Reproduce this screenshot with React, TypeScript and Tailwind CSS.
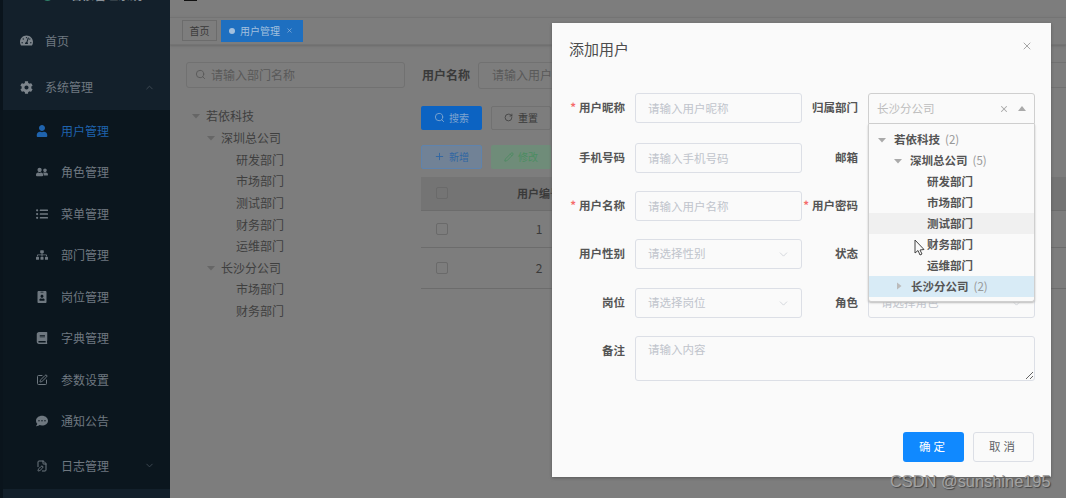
import React from "react";
import { ChevronDown, ChevronUp, Plus, RotateCw, Search, SquarePen, FilePen, Pencil, X } from "lucide-react";
import { FaCog, FaCommentDots, FaSitemap, FaTachometerAlt, FaUser, FaUserFriends, FaIdBadge, FaBook, FaListUl } from "react-icons/fa";

const subMenu = [
  { label: "用户管理", icon: <FaUser size={12} />, active: true },
  { label: "角色管理", icon: <FaUserFriends size={12} /> },
  { label: "菜单管理", icon: <FaListUl size={12} /> },
  { label: "部门管理", icon: <FaSitemap size={12} /> },
  { label: "岗位管理", icon: <FaIdBadge size={12} /> },
  { label: "字典管理", icon: <FaBook size={12} /> },
  { label: "参数设置", icon: <SquarePen size={12} /> },
  { label: "通知公告", icon: <FaCommentDots size={12} /> },
];

const Caret = ({ right, color }: { right?: boolean; color: string }) => (
  <svg width="8" height="8" viewBox="0 0 8 8" className="shrink-0">
    <path d={right ? "M2 0.5 L6.5 4 L2 7.5 Z" : "M0 2 L8 2 L4 6.5 Z"} fill={color} />
  </svg>
);

const Sidebar = () => (
  <aside className="w-[170px] h-full shrink-0 flex flex-col bg-[#13202b] border-l-[3px] border-[#0a141c] text-[#6f7880] text-xs overflow-hidden">
    <div className="h-[17px] overflow-hidden relative">
      <div className="flex items-center gap-[17px] pl-[39px] -mt-[13px] text-[#8a9299] font-bold">
        <span className="w-[11px] h-[11px] rounded-full bg-[#2f7f68]" />
        <span>若依管理系统</span>
      </div>
    </div>
    <div className="h-[47px] flex items-center pl-[17px] gap-[12px]">
      <FaTachometerAlt size={13} className="text-[#7d858c]" />
      <span>首页</span>
    </div>
    <div className="h-[46px] flex items-center pl-[17px] gap-[12px]">
      <FaCog size={13} className="text-[#7d858c]" />
      <span>系统管理</span>
      <ChevronUp size={11} className="ml-auto mr-[15px] text-[#3f4a54]" />
    </div>
    <div className="bg-[#0b161e]">
      {subMenu.map((m) => (
        <div
          key={m.label}
          className={
            "h-[41.5px] flex items-center pl-[33px] gap-[13px] " +
            (m.active ? "text-[#1f63ad]" : "")
          }
        >
          {m.icon}
          <span>{m.label}</span>
        </div>
      ))}
      <div className="h-[47px] flex items-center pl-[33px] gap-[13px]">
        <FilePen size={12} />
        <span>日志管理</span>
        <ChevronDown size={11} className="ml-auto mr-[15px] text-[#3f4a54]" />
      </div>
    </div>
    <div className="flex-1 bg-[#13202b]" />
  </aside>
);

const DeptTree = () => {
  const rows: [string, number, boolean][] = [
    ["若依科技", 0, true],
    ["深圳总公司", 1, true],
    ["研发部门", 2, false],
    ["市场部门", 2, false],
    ["测试部门", 2, false],
    ["财务部门", 2, false],
    ["运维部门", 2, false],
    ["长沙分公司", 1, true],
    ["市场部门", 2, false],
    ["财务部门", 2, false],
  ];
  return (
    <div className="mt-[18px] text-xs text-[#3f3f3f]">
      {rows.map(([name, level, open], i) => (
        <div key={i} className="h-[21.65px] flex items-center">
          <span className={level === 0 ? "w-[6px]" : level === 1 ? "w-[21px]" : "w-[50px]"} />
          {open && <Caret color="#666666" />}
          {open && <span className="w-[6px]" />}
          <span>{name}</span>
        </div>
      ))}
    </div>
  );
};

const Main = () => (
  <main className="flex-1 min-w-0 h-full bg-[#7d7d7d] flex flex-col overflow-hidden text-xs text-[#3a3a3a]">
    <div className="h-[17px] shrink-0 overflow-hidden">
      <div className="flex items-center -mt-[14px] pl-[14px] text-[#2f2f2f]">
        <span className="w-[13px] h-[13px] bg-[#111111]" />
        <span className="ml-[21px]">首页</span>
        <span className="ml-[28px]">系统管理</span>
        <span className="ml-[18px]">用户</span>
        <span className="ml-[15px]">管理</span>
      </div>
    </div>
    <div className="h-[27.5px] shrink-0 flex items-center gap-[4px] pl-[12px] border-y border-[#747474] shadow-[0_1px_2px_#6a6a6a] text-[10px]">
      <span className="h-[21px] w-[35px] flex items-center justify-center border border-[#6c6c6c] text-[#3a3a3a]">首页</span>
      <span className="h-[22px] w-[82px] flex items-center pl-[8px] bg-[#1e6fc0] text-[#a3c0de]">
        <span className="w-[6px] h-[6px] rounded-full bg-[#a3c0de] mr-[5px]" />
        用户管理
        <X size={7} className="ml-[6px]" />
      </span>
    </div>
    <div className="flex flex-1 min-h-0 pl-[16px] pt-[17px] gap-[16px]">
      <div className="w-[219px] shrink-0">
        <div className="h-[26px] border border-[#717171] rounded-[3px] flex items-center pl-[8px] gap-[5px] text-[#595959]">
          <Search size={11} />
          <span>请输入部门名称</span>
        </div>
        <DeptTree />
      </div>
      <div className="flex-1 min-w-0">
        <div className="flex items-center h-[27px] w-[700px]">
          <span className="font-bold w-[57px] shrink-0 pl-px">用户名称</span>
          <div className="h-[27px] w-[180px] pl-[13px] flex items-center border border-[#717171] rounded-[3px] text-[#595959]">请输入用户名称</div>
          <div className="ml-auto h-[26px] w-[100px] flex items-center pl-[50px] border-y border-[#717171] text-[#595959]">用户状态</div>
        </div>
        <div className="flex gap-[9px] mt-[17px] text-[10px]">
          <span className="w-[61px] h-[24px] flex items-center justify-center gap-[4px] rounded-[2px] bg-[#0c63c2] text-[#7fa5cf]">
            <Search size={11} />
            搜索
          </span>
          <span className="w-[60px] h-[24px] flex items-center justify-center gap-[5px] rounded-[2px] border border-[#717171]">
            <RotateCw size={9} />
            重置
          </span>
        </div>
        <div className="flex gap-[9px] mt-[15px] text-[10px]">
          <span className="w-[61px] h-[24px] flex items-center justify-center gap-[4px] rounded-[2px] border border-[#5f83ad] bg-[#718296] text-[#2f66a3]">
            <Plus size={11} />
            新增
          </span>
          <span className="w-[60px] h-[24px] flex items-center justify-center gap-[4px] rounded-[2px] bg-[#6f8c79] text-[#4c8c62]">
            <Pencil size={10} />
            修改
          </span>
        </div>
        <div className="mt-[8px] w-[700px]">
          <div className="h-[34px] flex items-center bg-[#747474] border-b border-[#6c6c6c] font-bold text-[11px]">
            <span className="w-[42px] flex justify-center">
              <span className="w-[12px] h-[12px] border border-[#6a6a6a] rounded-[2px]" />
            </span>
            <span className="w-[152px] text-center">用户编号</span>
          </div>
          {[
            { n: "1", h: "h-[37px]" },
            { n: "2", h: "h-[41px]" },
          ].map((r) => (
            <div key={r.n} className={"flex items-center border-b border-[#6c6c6c] " + r.h}>
              <span className="w-[42px] flex justify-center">
                <span className="w-[12px] h-[12px] border border-[#6a6a6a] rounded-[2px]" />
              </span>
              <span className="w-[152px] text-center">{r.n}</span>
            </div>
          ))}
        </div>
      </div>
    </div>
  </main>
);

const Field = ({ label, required, children }: { label: string; required?: boolean; children: React.ReactNode }) => (
  <>
    <label className="h-[30px] flex items-center justify-end pr-[10px] font-bold text-[#555555] text-[11.5px] whitespace-nowrap">
      {required && <span className="text-[#f56c6c] mr-[3px]">*</span>}
      {label}
    </label>
    {children}
  </>
);

const inputClass =
  "h-[30px] w-full px-[12px] bg-transparent border border-[#dcdfe6] rounded-[3px] text-[11.5px] outline-none placeholder:text-[#c0c4cc]";

const SelectBox = ({ text }: { text: string }) => (
  <div className="h-[30px] w-full pl-[12px] pr-[11px] flex items-center justify-between border border-[#dcdfe6] rounded-[3px] text-[11.5px] text-[#c0c4cc]">
    <span>{text}</span>
    <ChevronDown size={13} strokeWidth={1.2} />
  </div>
);

const treeRows = [
  { name: "若依科技", count: "(2)", pl: "pl-[9px]", caret: true },
  { name: "深圳总公司", count: "(5)", pl: "pl-[25px]", caret: true },
  { name: "研发部门", pl: "pl-[58px]" },
  { name: "市场部门", pl: "pl-[58px]" },
  { name: "测试部门", pl: "pl-[58px]", bg: "bg-[#f0f0f0]" },
  { name: "财务部门", pl: "pl-[58px]" },
  { name: "运维部门", pl: "pl-[58px]" },
  { name: "长沙分公司", count: "(2)", pl: "pl-[26px]", caret: true, closed: true, bg: "bg-[#d8ebf6]" },
];

const DeptSelect = () => (
  <div className="relative">
    <div className="h-[31px] pl-[8px] pr-[8px] flex items-center border border-[#cfcfcf] rounded-t-[3px] text-[11.5px] text-[#bdbdbd]">
      <span>长沙分公司</span>
      <X size={10} className="ml-auto mr-[9px] text-[#a8a8a8]" strokeWidth={2.5} />
      <svg width="8" height="5" viewBox="0 0 8 5"><path d="M0 5 L4 0 L8 5 Z" fill="#aaaaaa" /></svg>
    </div>
    <div className="absolute z-10 left-0 right-0 top-[31px] pt-[5.5px] pb-[4px] bg-[#fafafa] border border-t-0 border-[#cfcfcf] rounded-b-[3px] shadow-[0_1px_2px_#bbbbbb] text-[11.5px] font-bold text-[#555555]">
      {treeRows.map((r, i) => (
        <div key={i} className={"h-[20.9px] flex items-center " + r.pl + " " + (r.bg ?? "")}>
          {r.caret && <Caret right={r.closed} color={r.closed ? "#bbbbbb" : "#aaaaaa"} />}
          {r.caret && <span className="w-[8px]" />}
          <span>{r.name}</span>
          {r.count && <span className="ml-[5px] font-normal text-[#999999]">{r.count}</span>}
        </div>
      ))}
    </div>
  </div>
);

const Modal = () => (
  <div className="absolute z-20 left-[552px] top-[23px] w-[499px] h-[454px] bg-[#fafafa] shadow-[0_1px_3px_#5a5a5a] flex flex-col">
    <div className="h-[70px] shrink-0 flex items-start justify-between pl-[17px] pr-[18px] pt-[14px]">
      <span className="text-[15px] leading-[24px] text-[#4d4d4d]">添加用户</span>
      <X size={12} strokeWidth={1.5} className="mt-[3px] text-[#8a8a8a]" />
    </div>
    <div className="grid grid-cols-[83px_167px_66px_167px] grid-rows-[50px_48px_48px_49px_48px] items-start">
      <Field label="用户昵称" required><input className={inputClass} placeholder="请输入用户昵称" /></Field>
      <Field label="归属部门"><DeptSelect /></Field>
      <Field label="手机号码"><input className={inputClass} placeholder="请输入手机号码" /></Field>
      <Field label="邮箱"><input className={inputClass} placeholder="请输入邮箱" /></Field>
      <Field label="用户名称" required><input className={inputClass} placeholder="请输入用户名称" /></Field>
      <Field label="用户密码" required><input className={inputClass} placeholder="请输入用户密码" /></Field>
      <Field label="用户性别"><SelectBox text="请选择性别" /></Field>
      <Field label="状态"><SelectBox text="" /></Field>
      <Field label="岗位"><SelectBox text="请选择岗位" /></Field>
      <Field label="角色"><SelectBox text="请选择角色" /></Field>
    </div>
    <div className="flex">
      <label className="w-[83px] h-[30px] flex items-center justify-end pr-[10px] font-bold text-[#555555] text-[11.5px]">备注</label>
      <textarea
        className="w-[400px] h-[45px] px-[12px] py-[4px] bg-transparent border border-[#dcdfe6] rounded-[3px] text-[11.5px] outline-none placeholder:text-[#c0c4cc]"
        placeholder="请输入内容"
      />
    </div>
    <div className="mt-auto mb-[15px] pr-[17px] flex justify-end gap-[9px] text-[11.5px]">
      <span className="w-[61px] h-[30px] flex items-center justify-center tracking-[3px] rounded-[3px] bg-[#1089ff] text-white">确定</span>
      <span className="w-[61px] h-[30px] flex items-center justify-center tracking-[3px] rounded-[3px] border border-[#dcdfe6] text-[#606266]">取消</span>
    </div>
  </div>
);

export default function App() {
  return (
    <div
      className="relative w-[1066px] h-[498px] flex overflow-hidden"
      style={{ fontFamily: '"Noto Sans CJK SC", "Noto Sans", sans-serif' }}
    >
      <Sidebar />
      <Main />
      <Modal />
      {/* mouse pointer caught in the capture */}
      <svg width="12" height="18" viewBox="0 0 12 18" className="absolute z-30 left-[914px] top-[239px]">
        <path d="M1 1 L1 14 L4 11.5 L6 16 L8 15 L6 11 L10 10.5 Z" fill="#fafafa" stroke="#444444" strokeWidth="1" />
      </svg>
      <span
        className="absolute z-30 left-[890px] top-[472px] text-[16.4px] leading-[18px] text-[#a3a3a3] [text-shadow:1px_1px_1px_#444444]"
        style={{ fontFamily: '"Liberation Sans", sans-serif' }}
      >
        CSDN @sunshine195
      </span>
    </div>
  );
}
